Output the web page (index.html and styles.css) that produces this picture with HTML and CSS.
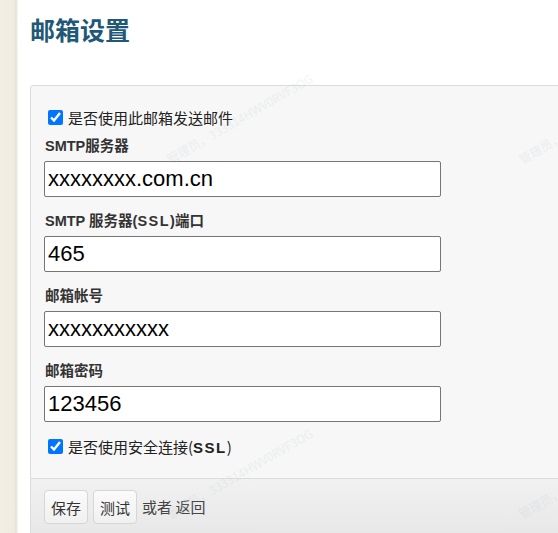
FILE: index.html
```html
<!DOCTYPE html>
<html lang="zh-CN">

<head>
    <meta charset="UTF-8">
    <meta name="viewport" content="width=device-width, initial-scale=1.0">
    <title>邮箱设置</title>
    <link rel="stylesheet" href="styles.css">
</head>

<body>
    <div class="layout">
        <aside class="side-strip"></aside>

        <main class="content">
            <h1 class="page-title">邮箱设置</h1>

            <form class="mail-form">
                <div class="form-body">
                    <div class="check-row">
                        <input type="checkbox" id="useMail" checked>
                        <label for="useMail">是否使用此邮箱发送邮件</label>
                    </div>

                    <div class="form-group">
                        <label for="smtpHost">SMTP服务器</label>
                        <input type="text" id="smtpHost" value="xxxxxxxx.com.cn">
                    </div>

                    <div class="form-group">
                        <label for="smtpPort">SMTP 服务器(<span class="ssl">SSL</span>)端口</label>
                        <input type="text" id="smtpPort" value="465">
                    </div>

                    <div class="form-group">
                        <label for="mailUser">邮箱帐号</label>
                        <input type="text" id="mailUser" value="xxxxxxxxxxx">
                    </div>

                    <div class="form-group">
                        <label for="mailPass">邮箱密码</label>
                        <input type="text" id="mailPass" value="123456">
                    </div>

                    <div class="check-row check-row-last">
                        <input type="checkbox" id="useSsl" checked>
                        <label for="useSsl">是否使用安全连接(<span class="ssl">SSL</span>)</label>
                    </div>
                </div>

                <div class="form-actions">
                    <button type="submit" class="btn">保存</button>
                    <button type="button" class="btn">测试</button>
                    <span class="alt-text">或者 <a href="#">返回</a></span>
                </div>
            </form>
        </main>
    </div>

    <!-- account watermark -->
    <div class="watermark">
        <span class="wm" style="left: -180px; top: 150px;">管理员，333314HWV0RVF3OG</span>
        <span class="wm" style="left: 172px; top: 150px;">管理员，333314HWV0RVF3OG</span>
        <span class="wm" style="left: 524px; top: 150px;">管理员，333314HWV0RVF3OG</span>
        <span class="wm" style="left: -180px; top: 505px;">管理员，333314HWV0RVF3OG</span>
        <span class="wm" style="left: 172px; top: 505px;">管理员，333314HWV0RVF3OG</span>
        <span class="wm" style="left: 524px; top: 505px;">管理员，333314HWV0RVF3OG</span>
    </div>
</body>

</html>
```

FILE: styles.css
```css
* {
    margin: 0;
    padding: 0;
    box-sizing: border-box;
}

body {
    font-family: "Liberation Sans", Arial, "Noto Sans CJK SC", sans-serif;
    font-size: 14px;
    color: #333;
    background-color: #fff;
    overflow: hidden;
}

.layout {
    display: flex;
    min-height: 100vh;
}

.side-strip {
    width: 18px;
    flex-shrink: 0;
    background: linear-gradient(to right, #f3eee4 0, #f1ece2 14px, #e6e1d8 16px, #fafafa 18px);
}

.content {
    flex-grow: 1;
    padding-left: 12px;
    overflow: hidden;
}

.page-title {
    font-family: "Noto Sans CJK SC", sans-serif;
    font-size: 25px;
    font-weight: 700;
    line-height: 36px;
    color: #1f5977;
    margin: 11px 0 38px 0;
}

.mail-form {
    width: 620px;
    border: 1px solid #dcdcdc;
    border-radius: 3px 0 0 0;
    background-color: #f7f7f7;
}

.form-body {
    padding: 21px 13px 22px 13px;
}

.check-row {
    display: flex;
    align-items: center;
    height: 20px;
    margin-bottom: 9px;
}

.check-row-last {
    margin-top: 13px;
    margin-bottom: 0;
}

.check-row input {
    width: 15px;
    height: 15px;
    margin: 0 5px 0 4px;
    accent-color: #0075ff;
}

.check-row label {
    font-family: "Noto Sans CJK SC", sans-serif;
    font-size: 15px;
    color: #222;
}

.ssl {
    font-family: "Liberation Sans", Arial, sans-serif;
    font-weight: 700;
    letter-spacing: 1.5px;
}

.form-group {
    margin-bottom: 14px;
}

.form-group label {
    display: block;
    height: 20px;
    line-height: 20px;
    margin-bottom: 5px;
    padding-left: 1px;
    font-weight: 700;
    font-size: 14.5px;
    color: #333;
}

.form-group input {
    display: block;
    width: 397px;
    height: 36px;
    padding: 0 3px;
    border: 1px solid #767676;
    border-radius: 2px;
    background-color: #fff;
    font-family: "Liberation Sans", Arial, sans-serif;
    font-size: 22px;
    color: #000;
}

.form-actions {
    display: flex;
    align-items: flex-start;
    gap: 5px;
    height: 60px;
    padding: 11px 13px 0 13px;
    border-top: 1px solid #dcdcdc;
    background: linear-gradient(to bottom, #f1f1f1, #e7e7e7);
}

.btn {
    width: 44px;
    height: 34px;
    padding: 0;
    border: 1px solid #d6d6d6;
    border-radius: 4px;
    background: linear-gradient(to bottom, #fbfbfb, #f0f0f0);
    font-family: "Noto Sans CJK SC", sans-serif;
    font-size: 15px;
    color: #333;
    cursor: pointer;
}

.btn:hover {
    background: #e9e9e9;
}

.alt-text {
    line-height: 34px;
    font-family: "Noto Sans CJK SC", sans-serif;
    font-size: 15px;
    color: #444;
}

.alt-text a {
    color: #444;
    text-decoration: none;
}

.watermark {
    position: fixed;
    inset: 0;
    pointer-events: none;
    overflow: hidden;
}

.wm {
    position: absolute;
    font-family: "Noto Sans CJK SC", sans-serif;
    font-size: 12px;
    white-space: nowrap;
    color: rgba(170, 195, 205, 0.2);
    transform: rotate(-30deg);
    transform-origin: left bottom;
}
```
